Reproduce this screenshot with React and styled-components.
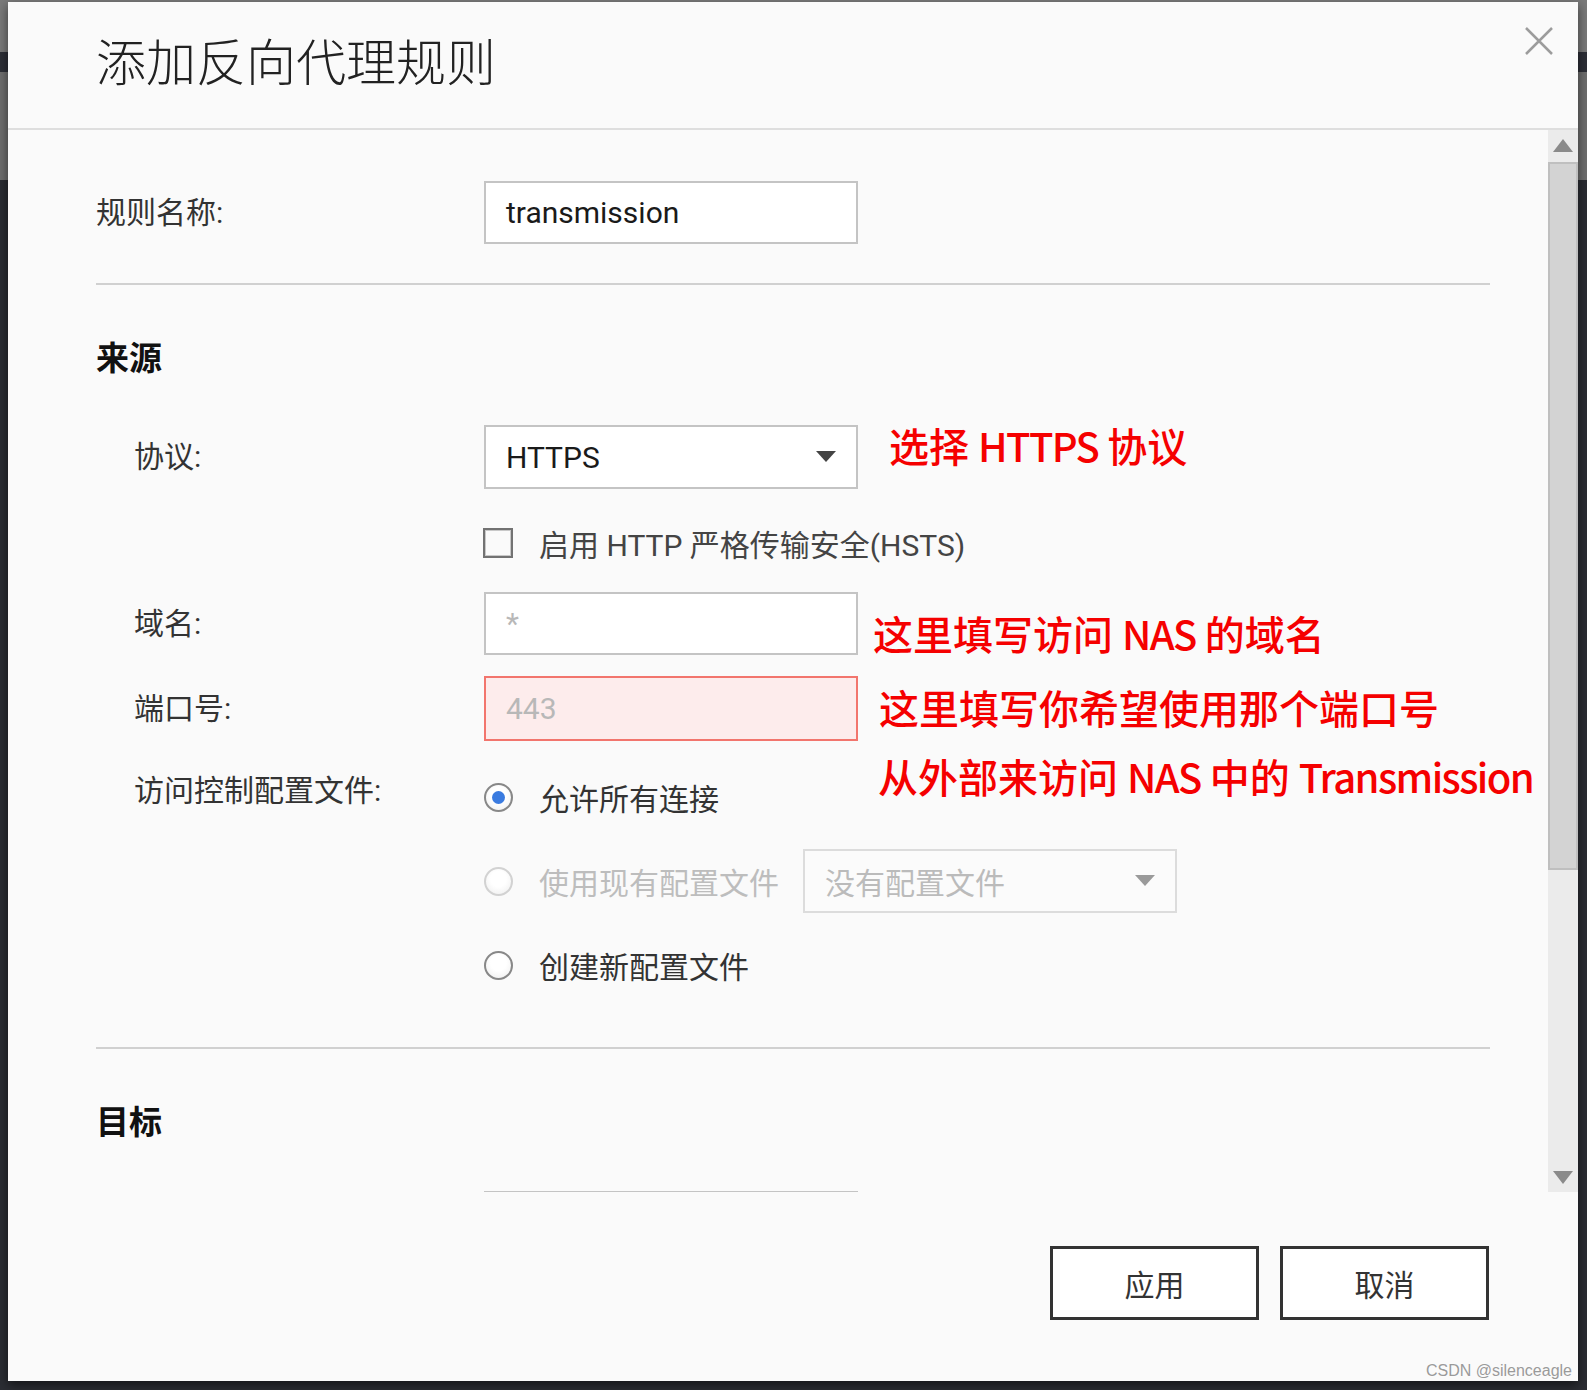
import React from 'react';
import styled, { createGlobalStyle, css } from 'styled-components';

const GlobalStyle = createGlobalStyle`
  html, body {
    margin: 0;
    padding: 0;
  }
  body {
    font-family: Roboto, "Noto Sans CJK SC", sans-serif;
    background: linear-gradient(to bottom, #7a7a7a 0 52px, #2d2f37 52px 72px, #6e6e6e 72px 180px, #2b2d33 180px);
  }
`;

const Backdrop = styled.div`
  position: relative;
  display: flex;
  min-height: 1390px;
  box-sizing: border-box;
  padding: 2px 9px 9px 8px;
`;

const Dialog = styled.div`
  display: flex;
  flex-direction: column;
  width: 1570px;
  height: 1379px;
  background: #fafafa;
  box-shadow: 0 4px 10px rgba(0, 0, 0, 0.55);
`;

const Header = styled.div`
  display: flex;
  justify-content: space-between;
  height: 126px;
  padding-left: 88px;
  border-bottom: 2px solid #dedede;
`;

const Title = styled.h1`
  align-self: center;
  margin: 0 0 12px;
  font-family: "Noto Sans CJK SC", sans-serif;
  font-size: 50px;
  font-weight: 300;
  line-height: 1;
  color: #222;
`;

const CloseButton = styled.button`
  align-self: flex-start;
  margin: 25px 25px 0 0;
  padding: 0;
  width: 28px;
  height: 28px;
  border: none;
  background: none;
`;

const BodyWrap = styled.div`
  display: flex;
  height: 1062px;
`;

const Scroller = styled.div`
  flex: 1;
  overflow: hidden;
  padding: 0 58px 0 88px;
`;

const Row = styled.div`
  position: relative;
  display: flex;
  align-items: ${(p) => (p.$top ? 'flex-start' : 'center')};
  margin-top: ${(p) => p.$mt || 0}px;
`;

const Label = styled.div`
  box-sizing: border-box;
  flex: none;
  width: 388px;
  padding-left: ${(p) => (p.$nested ? 38 : 0)}px;
  padding-top: ${(p) => p.$pt || 0}px;
  font-size: 30px;
  line-height: 40px;
  color: #333;
`;

const Field = styled.div`
  box-sizing: border-box;
  flex: none;
  display: flex;
  align-items: center;
  justify-content: space-between;
  width: 374px;
  height: ${(p) => p.$h || 64}px;
  padding: 0 20px;
  border: 2px solid #c4c4c4;
  background: #fff;
  font-size: 30px;
  color: #1a1a1a;
  ${(p) =>
    p.$error &&
    css`
      border-color: #f2756d;
      background: #fdecec;
    `}
  ${(p) =>
    p.$disabled &&
    css`
      border-color: #dcdcdc;
      background: #fbfbfb;
      color: #bbb;
    `}
`;

const Placeholder = styled.span`
  color: #b8b8b8;
`;

const Caret = ({ color }) => (
  <svg width="20" height="12" viewBox="0 0 20 12">
    <polygon points="0,0 20,0 10,11" fill={color} />
  </svg>
);

const Divider = styled.hr`
  margin: ${(p) => p.$mt}px 0 0;
  border: none;
  border-top: 2px solid #d0d0d0;
`;

const SectionTitle = styled.h2`
  margin: ${(p) => p.$mt}px 0 0;
  font-family: "Noto Sans CJK SC", sans-serif;
  font-size: 33px;
  font-weight: 700;
  line-height: 40px;
  color: #111;
`;

const CheckRow = styled.div`
  display: flex;
  align-items: center;
  height: 30px;
  margin: 39px 0 0 387px;
  font-size: 30px;
  color: #444;
`;

const Checkbox = styled.span`
  box-sizing: border-box;
  flex: none;
  width: 30px;
  height: 30px;
  margin-right: 26px;
  border: 2px solid #727272;
  box-shadow: inset 0 0 0 1px #c8c8c8;
  background: #fafafa;
`;

const Options = styled.div`
  display: flex;
  flex-direction: column;
  gap: 20px;
`;

const Option = styled.div`
  display: flex;
  align-items: center;
  height: 64px;
  font-size: 30px;
  color: ${(p) => (p.$disabled ? '#bdbdbd' : '#333')};
`;

const Radio = styled.span`
  box-sizing: border-box;
  flex: none;
  display: flex;
  align-items: center;
  justify-content: center;
  width: 29px;
  height: 29px;
  margin-right: 26px;
  border-radius: 50%;
  border: 2px solid ${(p) => (p.$disabled ? '#d2d2d2' : '#888')};
  background: radial-gradient(circle at 50% 40%, #fff 40%, #ececec 100%);
  &::after {
    content: '';
    display: ${(p) => (p.$checked ? 'block' : 'none')};
    width: 13px;
    height: 13px;
    border-radius: 50%;
    background: #3a7be0;
  }
`;

const ProfileSelect = styled(Field)`
  margin-left: 24px;
`;

const Note = styled.span`
  flex: none;
  margin-left: ${(p) => p.$ml || 0}px;
  transform: translateY(${(p) => p.$dy || 0}px);
  font-family: "Noto Sans CJK SC", sans-serif;
  font-size: 40px;
  font-weight: 500;
  line-height: 48px;
  color: #f50000;
  white-space: nowrap;
`;

// the annotation's latin words are set narrower than the CJK face gives them
const Latin = styled.span`
  letter-spacing: -0.04em;
`;

const FloatingNote = styled(Note)`
  position: absolute;
  left: 782px;
  top: -13px;
`;

const ScrollBar = styled.div`
  display: flex;
  flex-direction: column;
  width: 30px;
  background: #ebebeb;
`;

const ScrollArrow = styled.div`
  display: flex;
  align-items: center;
  justify-content: center;
  height: 30px;
`;

const Thumb = styled.div`
  box-sizing: border-box;
  height: 708px;
  margin-top: 2px;
  border: 2px solid #bfbfbf;
  background: #d3d3d3;
`;

const Track = styled.div`
  flex: 1;
`;

const Footer = styled.div`
  flex: 1;
  display: flex;
  justify-content: flex-end;
  align-items: flex-start;
  gap: 21px;
  padding: 54px 89px 0 0;
`;

const Button = styled.button`
  box-sizing: border-box;
  width: 209px;
  height: 74px;
  border: 3px solid #333;
  background: #fff;
  font-family: "Noto Sans CJK SC", sans-serif;
  font-size: 30px;
  color: #333;
`;

const Watermark = styled.span`
  position: absolute;
  right: 15px;
  bottom: 10px;
  font-family: "Liberation Sans", Arial, sans-serif;
  font-size: 16px;
  color: #9a9a9a;
  text-shadow: 0 0 2px #fff;
`;

export default function App() {
  return (
    <>
      <GlobalStyle />
      <Backdrop>
        <Dialog>
          <Header>
            <Title>添加反向代理规则</Title>
            <CloseButton aria-label="关闭">
              <svg width="28" height="28" viewBox="0 0 28 28">
                <path d="M1 1 L27 27 M27 1 L1 27" stroke="#9c9c9c" strokeWidth="2.5" />
              </svg>
            </CloseButton>
          </Header>

          <BodyWrap>
            <Scroller>
              <Row $mt={51}>
                <Label>规则名称:</Label>
                <Field $h={63}>transmission</Field>
              </Row>
              <Divider $mt={39} />

              <SectionTitle $mt={51}>来源</SectionTitle>
              <Row $mt={49}>
                <Label $nested>协议:</Label>
                <Field>
                  HTTPS
                  <Caret color="#444" />
                </Field>
                <Note $ml={31} $dy={-12}>
                  选择 <Latin>HTTPS</Latin> 协议
                </Note>
              </Row>
              <CheckRow>
                <Checkbox />
                启用 HTTP 严格传输安全(HSTS)
              </CheckRow>
              <Row $mt={34}>
                <Label $nested>域名:</Label>
                <Field $h={63}>
                  <Placeholder>*</Placeholder>
                </Field>
                <Note $ml={15} $dy={9}>
                  这里填写访问 <Latin>NAS</Latin> 的域名
                </Note>
              </Row>
              <Row $mt={21}>
                <Label $nested>端口号:</Label>
                <Field $h={65} $error>
                  <Placeholder>443</Placeholder>
                </Field>
                <Note $ml={21} $dy={-2}>这里填写你希望使用那个端口号</Note>
              </Row>
              <Row $mt={24} $top>
                <Label $nested $pt={6}>访问控制配置文件:</Label>
                <Options>
                  <Option>
                    <Radio $checked />
                    允许所有连接
                  </Option>
                  <Option $disabled>
                    <Radio $disabled />
                    使用现有配置文件
                    <ProfileSelect $disabled>
                      没有配置文件
                      <Caret color="#9a9a9a" />
                    </ProfileSelect>
                  </Option>
                  <Option>
                    <Radio />
                    创建新配置文件
                  </Option>
                </Options>
                <FloatingNote>
                  从外部来访问 <Latin>NAS</Latin> 中的 <Latin>Transmission</Latin>
                </FloatingNote>
              </Row>
              <Divider $mt={50} />

              <SectionTitle $mt={51}>目标</SectionTitle>
              <Row $mt={51}>
                <Label $nested />
                <Field />
              </Row>
            </Scroller>

            <ScrollBar>
              <ScrollArrow>
                <svg width="20" height="13" viewBox="0 0 20 13">
                  <polygon points="10,0 20,13 0,13" fill="#8a8a8a" />
                </svg>
              </ScrollArrow>
              <Thumb />
              <Track />
              <ScrollArrow>
                <svg width="20" height="13" viewBox="0 0 20 13">
                  <polygon points="0,0 20,0 10,13" fill="#8a8a8a" />
                </svg>
              </ScrollArrow>
            </ScrollBar>
          </BodyWrap>

          <Footer>
            <Button>应用</Button>
            <Button>取消</Button>
          </Footer>
        </Dialog>
        <Watermark>CSDN @silenceagle</Watermark>
      </Backdrop>
    </>
  );
}
